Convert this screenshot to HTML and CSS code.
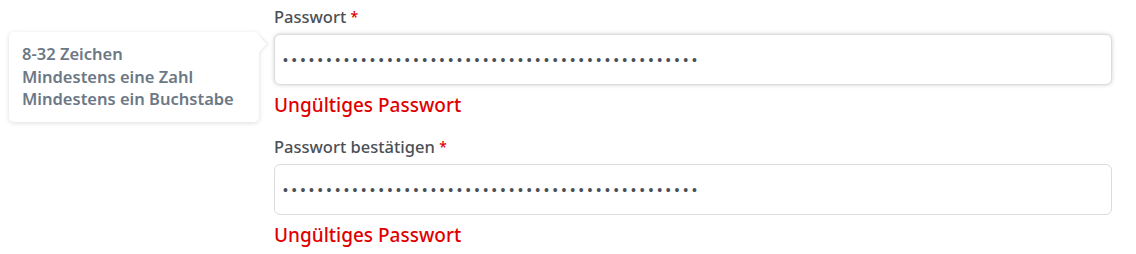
FILE: index.html
```html
<!DOCTYPE html>
<html>
<head>
<title>Passwort</title>
<link rel="stylesheet" href="styles.css">
</head>
<body>
  <div class="form">
    <div class="field">
      <label class="label" for="pw">Passwort <span class="req">*</span></label>
      <div class="input-wrap">
        <div class="hint">
          <p>8-32 Zeichen</p>
          <p>Mindestens eine Zahl</p>
          <p>Mindestens ein Buchstabe</p>
        </div>
        <input class="input focused" id="pw" type="password" value="aaaaaaaaaaaaaaaaaaaaaaaaaaaaaaaaaaaaaaaaaaaaaaaa">
      </div>
      <p class="error">Ungültiges Passwort</p>
    </div>
    <div class="field">
      <label class="label" for="pw2">Passwort bestätigen <span class="req">*</span></label>
      <div class="input-wrap">
        <input class="input" id="pw2" type="password" value="aaaaaaaaaaaaaaaaaaaaaaaaaaaaaaaaaaaaaaaaaaaaaaaa">
      </div>
      <p class="error">Ungültiges Passwort</p>
    </div>
  </div>
</body>
</html>
```

FILE: styles.css
```css
body {
  margin: 0;
  background: #fff;
  font-family: "Noto Sans", Lato, sans-serif;
}

.form {
  width: 838px;
  margin-left: 274px;
  padding-top: 6px;
}

.field {
  margin-bottom: 17px;
}

.label {
  display: block;
  font-size: 16.5px;
  font-weight: 500;
  color: #4b5057;
  line-height: 22px;
  margin-bottom: 6px;
}

.req {
  color: #e00000;
  font-size: 14px;
  vertical-align: top;
}

.input-wrap {
  position: relative;
}

.input {
  box-sizing: border-box;
  width: 100%;
  height: 51px;
  border: 1px solid #dcdcdc;
  border-radius: 6px;
  padding: 0 8px;
  font-family: "Liberation Sans", Arial, sans-serif;
  font-size: 14px;
  letter-spacing: 3.8px;
  color: #4b5057;
  outline: none;
}

.input.focused {
  box-shadow: 0 0 4px rgba(0, 0, 0, 0.18);
}

.error {
  margin: 6px 0 0;
  font-size: 19px;
  font-weight: 500;
  color: #e00000;
  line-height: 28px;
}

.hint {
  position: absolute;
  right: 100%;
  top: -2px;
  margin-right: 15px;
  width: 250px;
  box-sizing: border-box;
  padding: 11px 13px;
  background: #fff;
  border-radius: 5px;
  box-shadow: 0 1px 5px rgba(0, 0, 0, 0.14);
  color: #6c7885;
  font-size: 16.5px;
  font-weight: 600;
  line-height: 22.5px;
}

.hint p {
  margin: 0;
}

.hint::after {
  content: '';
  position: absolute;
  left: 100%;
  top: 4px;
  border: 8px solid transparent;
  border-left-color: #fff;
  filter: drop-shadow(2px 0 1px rgba(0, 0, 0, 0.08));
}
```
